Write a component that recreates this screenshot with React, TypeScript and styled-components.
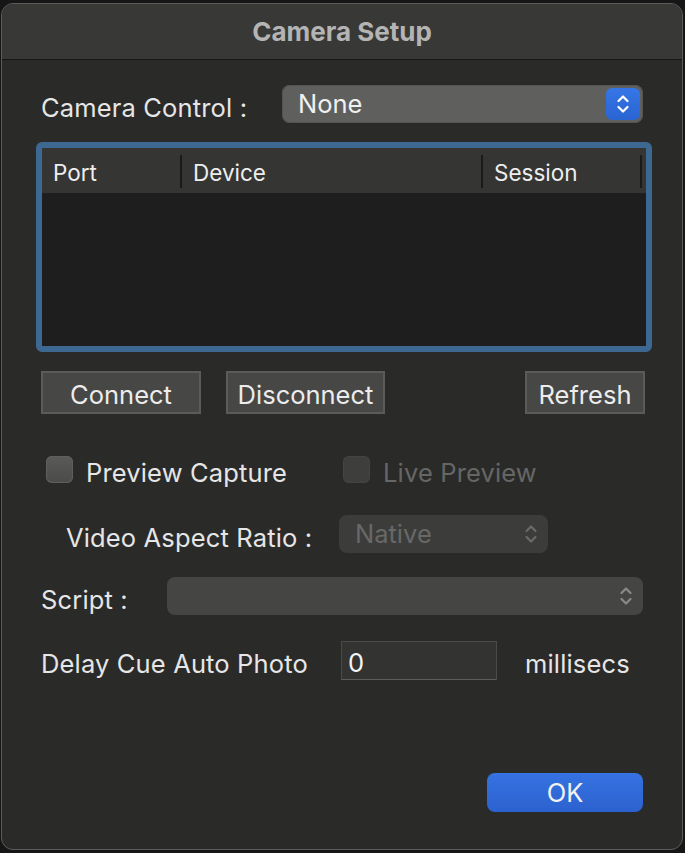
import styled, { createGlobalStyle } from "styled-components";

const GlobalStyle = createGlobalStyle`
  html, body {
    margin: 0;
    padding: 0;
    background: #161616;
  }
  body {
    font-family: Inter, "Liberation Sans", sans-serif;
  }
`;

// Ventana del diálogo
const Window = styled.div`
  width: 682px;
  height: 847px;
  margin: 3px 0 0 1px;
  box-sizing: border-box;
  display: flex;
  flex-direction: column;
  background: #2a2a29;
  border: 1px solid #5c5c5c;
  border-radius: 12px;
  overflow: hidden;
`;

const TitleBar = styled.div`
  height: 55px;
  flex-shrink: 0;
  display: flex;
  align-items: center;
  justify-content: center;
  background: #383837;
  border-bottom: 1px solid #161616;
  color: #b4b4b4;
  font-size: 26px;
  font-weight: 700;
`;

const Body = styled.div`
  flex: 1;
  display: flex;
  flex-direction: column;
  padding: 25px 39px 37px 39px;
  color: #e6e6e6;
  font-size: 25.5px;
`;

const Row = styled.div<{ $top?: number }>`
  display: flex;
  align-items: center;
  margin-top: ${(p) => p.$top ?? 0}px;
`;

const Label = styled.span<{ $width?: number; $indent?: number; $dim?: boolean }>`
  width: ${(p) => (p.$width ? `${p.$width}px` : "auto")};
  flex-shrink: 0;
  padding-left: ${(p) => p.$indent ?? 0}px;
  position: relative;
  top: 3px;
  box-sizing: border-box;
  letter-spacing: 0.15px;
  color: ${(p) => (p.$dim ? "#666665" : "#e6e6e6")};
  white-space: nowrap;
`;

// Menú desplegable
const Select = styled.div<{ $width?: number; $tone: "active" | "disabled" | "plain" }>`
  width: ${(p) => (p.$width ? `${p.$width}px` : "auto")};
  flex: ${(p) => (p.$width ? "none" : "1")};
  height: 38px;
  box-sizing: border-box;
  display: flex;
  align-items: center;
  justify-content: space-between;
  padding: 0 3px 0 16px;
  border-radius: 8px;
  background: ${(p) =>
    p.$tone === "active" ? "#5f5f5e" : p.$tone === "disabled" ? "#3c3c3b" : "#454544"};
  color: ${(p) => (p.$tone === "disabled" ? "#686867" : "#f0f0f0")};
  box-shadow: ${(p) => (p.$tone === "active" ? "inset 0 0 0 1px #535352" : "none")};
`;

const SelectText = styled.span`
  padding-bottom: 2px;
`;

const Stepper = styled.div<{ $blue?: boolean }>`
  width: ${(p) => (p.$blue ? "34px" : "28px")};
  height: 32px;
  display: flex;
  align-items: center;
  justify-content: center;
  border-radius: 6px;
  background: ${(p) => (p.$blue ? "linear-gradient(#3576e6, #2a64d2)" : "transparent")};
`;

const Chevrons = ({ color }: { color: string }) => (
  <svg width="14" height="22" viewBox="0 0 14 22" fill="none">
    <path d="M2.5 8 L7 3.5 L11.5 8" stroke={color} strokeWidth="2.2" strokeLinecap="round" strokeLinejoin="round" />
    <path d="M2.5 14 L7 18.5 L11.5 14" stroke={color} strokeWidth="2.2" strokeLinecap="round" strokeLinejoin="round" />
  </svg>
);

// Tabla de dispositivos
const TableFrame = styled.div`
  margin: 19px -9px 0 -5px;
  height: 210px;
  box-sizing: border-box;
  border: 6px solid #3c6891;
  border-radius: 6px;
  background: #1e1e1e;
  display: flex;
  flex-direction: column;
`;

const TableHeader = styled.div`
  height: 45px;
  display: grid;
  grid-template-columns: 140px 301px 159px 1fr;
  background: #353534;
  color: #eeeeee;
  font-size: 22.5px;
`;

const HeaderCell = styled.div<{ $sep?: boolean }>`
  display: flex;
  align-items: center;
  padding: 4px 0 0 11px;
  position: relative;
  &::after {
    content: "";
    display: ${(p) => (p.$sep ? "block" : "none")};
    position: absolute;
    right: 0;
    top: 7px;
    bottom: 5px;
    width: 2px;
    background: #1a1a1a;
  }
`;

const PushButton = styled.button<{ $width: number }>`
  width: ${(p) => p.$width}px;
  height: 43px;
  background: #474746;
  border: 2px solid #5b5b5a;
  color: #ececec;
  font-family: inherit;
  font-size: 25.5px;
  padding: 3px 0 0;
`;

const Checkbox = styled.span<{ $dim?: boolean }>`
  width: 27px;
  height: 27px;
  box-sizing: border-box;
  border-radius: 6px;
  background: ${(p) => (p.$dim ? "#3e3e3d" : "linear-gradient(#5a5a59, #4b4b4a)")};
  box-shadow: inset 0 0 0 1px ${(p) => (p.$dim ? "#444443" : "#5f5f5e")};
  margin-right: 13px;
  flex-shrink: 0;
`;

const NumberField = styled.div`
  width: 156px;
  height: 39px;
  box-sizing: border-box;
  display: flex;
  align-items: center;
  padding: 3px 0 0 6px;
  background: #333332;
  border: 1px solid #4a4a49;
  border-bottom-color: #5e5e5d;
  color: #f4f4f4;
`;

const OkButton = styled.button`
  width: 156px;
  height: 39px;
  border: none;
  border-radius: 8px;
  background: linear-gradient(#3672e2, #2c62cf);
  color: #f2f2f2;
  font-family: inherit;
  font-size: 25.5px;
  padding: 0;
`;

const App = () => {
  const columns = ["Port", "Device", "Session", ""];
  return (
    <>
      <GlobalStyle />
      <Window>
        <TitleBar>Camera Setup</TitleBar>
        <Body>
          <Row>
            <Label $width={241}>Camera Control :</Label>
            <Select $tone="active">
              <SelectText>None</SelectText>
              <Stepper $blue>
                <Chevrons color="#ffffff" />
              </Stepper>
            </Select>
          </Row>

          <TableFrame>
            <TableHeader>
              {columns.map((c, i) => (
                <HeaderCell key={i} $sep={i < 3}>
                  {c}
                </HeaderCell>
              ))}
            </TableHeader>
          </TableFrame>

          <Row $top={19}>
            <PushButton $width={160}>Connect</PushButton>
            <PushButton $width={159} style={{ marginLeft: 25 }}>Disconnect</PushButton>
            <PushButton $width={120} style={{ marginLeft: "auto", marginRight: -2 }}>Refresh</PushButton>
          </Row>

          <Row $top={40} style={{ paddingLeft: 5 }}>
            <Checkbox />
            <Label $width={257}>Preview Capture</Label>
            <Checkbox $dim />
            <Label $dim>Live Preview</Label>
          </Row>

          <Row $top={30}>
            <Label $width={298} $indent={25}>Video Aspect Ratio :</Label>
            <Select $tone="disabled" $width={209}>
              <SelectText>Native</SelectText>
              <Stepper>
                <Chevrons color="#6a6a69" />
              </Stepper>
            </Select>
          </Row>

          <Row $top={24}>
            <Label $width={126}>Script :</Label>
            <Select $tone="plain">
              <span />
              <Stepper>
                <Chevrons color="#8a8a89" />
              </Stepper>
            </Select>
          </Row>

          <Row $top={26}>
            <Label $width={300}>Delay Cue Auto Photo</Label>
            <NumberField>0</NumberField>
            <Label style={{ marginLeft: 28 }}>millisecs</Label>
          </Row>

          <Row style={{ marginTop: "auto", justifyContent: "flex-end" }}>
            <OkButton>OK</OkButton>
          </Row>
        </Body>
      </Window>
    </>
  );
};

export default App;
